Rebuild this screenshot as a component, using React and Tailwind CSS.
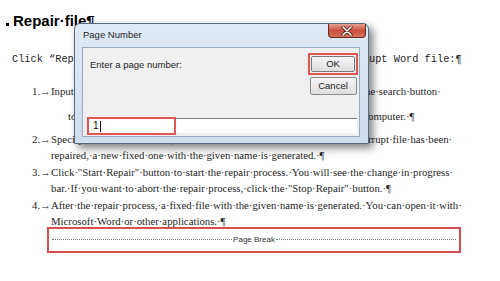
import React from "react";

const serif = { fontFamily: '"Liberation Serif", "Times New Roman", serif' };
const sans = { fontFamily: '"Liberation Sans", Arial, sans-serif' };
const mono = { fontFamily: '"Liberation Mono", "Courier New", monospace' };

const ListLine = ({ num, children }) => (
  <div className="flex whitespace-nowrap h-[16.5px] leading-[16.5px]">
    <span className="w-[19px] shrink-0">{num}</span>
    {children}
  </div>
);

// left text is cut off under the dialog, the right piece starts where the dialog ends
const Split = ({ width, left, right }) => (
  <>
    <span className="overflow-hidden shrink-0" style={{ width }}>
      {left}
    </span>
    <span>{right}</span>
  </>
);

const PageDialog = () => (
  <div
    className="absolute left-[74px] top-[23px] w-[295px] h-[121px] rounded-t-[6px] border border-[#56697f] bg-gradient-to-b from-[#dfe9f5] to-[#cfdcec] shadow-[4px_4px_8px_rgba(0,0,0,0.5)] flex flex-col"
    style={sans}
  >
    <div className="h-[23px] flex items-center justify-between pl-[8px] pr-[2px]">
      <span className="text-[9.5px] text-[#1e1e1e]">Page Number</span>
      <div className="self-start w-[38px] h-[14px] rounded-b-[4px] border border-t-0 border-[#6b2a22] bg-gradient-to-b from-[#e4a08f] via-[#c8503d] to-[#d3725c] flex items-center justify-center">
        <svg width="12" height="10" viewBox="0 0 12 10">
          <path d="M2 1 L10 9 M10 1 L2 9" stroke="#5a2118" strokeWidth="3.2" strokeLinecap="round" />
          <path d="M2 1 L10 9 M10 1 L2 9" stroke="#ffffff" strokeWidth="1.6" strokeLinecap="round" />
        </svg>
      </div>
    </div>
    <div className="flex-1 ml-[7px] mr-[8px] mb-[6px] bg-[#f0f0f0] border border-[#98aac0] flex flex-col">
      <div className="flex justify-between">
        <span className="mt-[10px] ml-[7px] text-[9.5px] text-[#1e1e1e]">Enter a page number:</span>
        <div className="flex flex-col items-center mt-[5px] mr-[1px]">
          <div className="w-[50px] h-[22px] border-2 border-[#e05656] p-[1px]">
            <div className="h-full rounded-[2px] border border-[#7a7a7a] bg-gradient-to-b from-[#f6f6f6] to-[#dedede] flex items-center justify-center text-[9.5px] text-[#1e1e1e]">
              OK
            </div>
          </div>
          <div className="mt-[2px] w-[47px] h-[18px] rounded-[2px] border border-[#8a8a8a] bg-gradient-to-b from-[#f6f6f6] to-[#dedede] flex items-center justify-center text-[9.5px] text-[#1e1e1e]">
            Cancel
          </div>
        </div>
      </div>
      <div className="relative mt-auto mb-[3px] ml-[4px] mr-[2px] h-[15px] bg-white border-t border-[#7d7d7d] flex items-center">
        <span className="ml-[6px] text-[10px] leading-none text-[#111]">1</span>
        <span className="ml-[1px] w-[1px] h-[11px] bg-black" />
        <div className="absolute left-[0px] top-[-2px] w-[89px] h-[18px] border-2 border-[#e05656]" />
      </div>
    </div>
  </div>
);

const App = () => {
  return (
    <div className="relative w-[500px] h-[281px] bg-white overflow-hidden text-[#262626]">
      <div className="pt-[12px]">
        <div className="flex items-baseline pl-[6px] h-[18px] leading-[18px] text-[15px] font-bold text-black" style={sans}>
          <span className="w-[3px] h-[3px] bg-black mr-[4px] self-end mb-[4px]" />
          <span>Repair·file¶</span>
        </div>

        <div className="mt-[21px] pl-[12px] flex whitespace-nowrap h-[16px] leading-[16px] text-[10.3px]" style={mono}>
          <Split
            width="357px"
            left={'Click “Repair” button, and then you can repair the corr'}
            right="upt Word file:¶"
          />
        </div>

        <div className="mt-[16px] pl-[32px] text-[10.75px]" style={serif}>
          <ListLine num="1.→">
            <Split width="314px" left="Input·the·path·of·the·corrupt·file·or·click·t" right="he·search·button·" />
          </ListLine>
          <div className="flex whitespace-nowrap h-[16.5px] leading-[16.5px] mt-[8px] pl-[36px]">
            <Split width="300px" left="to·choose·the·corrupt·file·from·your·c" right="omputer.·¶" />
          </div>
          <div className="mt-[6.5px]">
            <ListLine num="2.→">
              <Split width="317px" left="Specify·the·fixed·file·name,·when·the·co" right="rrupt·file·has·been·" />
            </ListLine>
          </div>
          <ListLine num="">repaired,·a·new·fixed·one·with·the·given·name·is·generated.·¶</ListLine>
          <ListLine num="3.→">
            Click·"Start·Repair"·button·to·start·the·repair·process.·You·will·see·the·change·in·progress·
          </ListLine>
          <ListLine num="">
            bar.·If·you·want·to·abort·the·repair·process,·click·the·"Stop·Repair"·button.·¶
          </ListLine>
          <ListLine num="4.→">
            After·the·repair·process,·a·fixed·file·with·the·given·name·is·generated.·You·can·open·it·with·
          </ListLine>
          <ListLine num="">Microsoft·Word·or·other·applications.·¶</ListLine>
        </div>

        <div className="ml-[47px] mt-[-3px] w-[414px] h-[26px] border-2 border-[#d94f4f] flex items-center px-[3px]">
          <div className="flex-1 border-t border-dotted border-[#777]" />
          <span className="px-[1px] text-[8px] text-[#333]" style={sans}>Page Break</span>
          <div className="flex-1 border-t border-dotted border-[#777]" />
        </div>
      </div>

      <PageDialog />
    </div>
  );
};

export default App;
